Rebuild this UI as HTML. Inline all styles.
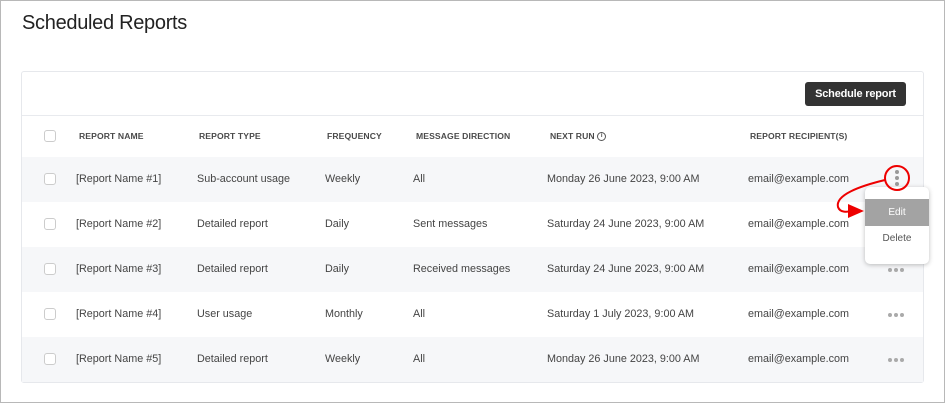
<!DOCTYPE html>
<html><head><meta charset="utf-8"><style>
*{box-sizing:border-box;margin:0;padding:0}
body{width:945px;height:403px;background:#fff;font-family:"Liberation Sans",sans-serif;position:relative;overflow:hidden}
.frame{position:absolute;left:0;top:0;width:945px;height:403px;border:1px solid #b8b8b8}
h1{position:absolute;left:22px;top:12px;font-size:20px;font-weight:normal;color:#222;letter-spacing:-0.3px}
.card{position:absolute;left:21px;top:71px;width:903px;height:312px;border:1px solid #e6e8ec;border-radius:3px}
.btn{position:absolute;left:805px;top:82px;width:101px;height:24px;background:#333;color:#fff;border-radius:3px;font-size:11px;font-weight:bold;text-align:center;line-height:24px;letter-spacing:-0.2px}
.sep{position:absolute;left:22px;top:115px;width:901px;height:1px;background:#e8eaee}
.row{position:absolute;left:22px;width:901px;height:45px;font-size:10.8px;color:#444}
.row.g{background:#f6f7f9}
.row span{position:absolute;top:0;line-height:45px;white-space:nowrap}
.hdr span{font-size:8.6px;font-weight:bold;color:#4a4a4a;letter-spacing:0.1px;line-height:43px}
.cb{position:absolute;left:22px;top:16px;width:12px;height:12px;border:1px solid #ccc;border-radius:3px;background:#fff}
.dots{position:absolute;left:866px;top:21px;width:18px;height:4px}
.dots i{position:absolute;top:0;width:4px;height:4px;border-radius:2px;background:#aaa}
</style></head><body>
<div class="frame"></div>
<h1>Scheduled Reports</h1>
<div class="card"></div>
<div class="btn">Schedule report</div>
<div class="sep"></div>
<div class="row hdr" style="top:115px;height:42px"><div class="cb" style="top:15px"></div><span style="left:57px">REPORT NAME</span><span style="left:177px">REPORT TYPE</span><span style="left:305px">FREQUENCY</span><span style="left:394px">MESSAGE DIRECTION</span><span style="left:528px">NEXT RUN <b style="display:inline-block;width:9px;height:9px;border:1px solid #555;border-radius:50%;line-height:7px;font-size:6px;text-align:center;vertical-align:middle">i</b></span><span style="left:728px">REPORT RECIPIENT(S)</span></div>

<div class="row g" style="top:157px"><div class="cb"></div><span style="left:54px">[Report Name #1]</span><span style="left:175px">Sub-account usage</span><span style="left:303px">Weekly</span><span style="left:391px">All</span><span style="left:525px">Monday 26 June 2023, 9:00 AM</span><span style="left:726px">email@example.com</span></div>
<div class="row" style="top:202px"><div class="cb"></div><span style="left:54px">[Report Name #2]</span><span style="left:175px">Detailed report</span><span style="left:303px">Daily</span><span style="left:391px">Sent messages</span><span style="left:525px">Saturday 24 June 2023, 9:00 AM</span><span style="left:726px">email@example.com</span></div>
<div class="row g" style="top:247px"><div class="cb"></div><span style="left:54px">[Report Name #3]</span><span style="left:175px">Detailed report</span><span style="left:303px">Daily</span><span style="left:391px">Received messages</span><span style="left:525px">Saturday 24 June 2023, 9:00 AM</span><span style="left:726px">email@example.com</span><div class="dots"><i style="left:0"></i><i style="left:6px"></i><i style="left:12px"></i></div></div>
<div class="row" style="top:292px"><div class="cb"></div><span style="left:54px">[Report Name #4]</span><span style="left:175px">User usage</span><span style="left:303px">Monthly</span><span style="left:391px">All</span><span style="left:525px">Saturday 1 July 2023, 9:00 AM</span><span style="left:726px">email@example.com</span><div class="dots"><i style="left:0"></i><i style="left:6px"></i><i style="left:12px"></i></div></div>
<div class="row g" style="top:337px"><div class="cb"></div><span style="left:54px">[Report Name #5]</span><span style="left:175px">Detailed report</span><span style="left:303px">Weekly</span><span style="left:391px">All</span><span style="left:525px">Monday 26 June 2023, 9:00 AM</span><span style="left:726px">email@example.com</span><div class="dots"><i style="left:0"></i><i style="left:6px"></i><i style="left:12px"></i></div></div>

<div style="position:absolute;left:865px;top:187px;width:64px;height:77px;background:#fff;border-radius:5px;box-shadow:0 1px 5px rgba(0,0,0,0.25)">
<div style="position:absolute;left:0;top:12px;width:64px;height:27px;background:#a3a3a3;color:#fff;font-size:10px;text-align:center;line-height:27px">Edit</div>
<div style="position:absolute;left:0;top:42px;width:64px;height:20px;color:#555;font-size:10px;text-align:center;line-height:20px">Delete</div>
</div>
<div style="position:absolute;left:895px;top:170px;width:4px;height:16px">
<i style="position:absolute;left:0;top:0;width:4px;height:4px;border-radius:2px;background:#999"></i>
<i style="position:absolute;left:0;top:6px;width:4px;height:4px;border-radius:2px;background:#999"></i>
<i style="position:absolute;left:0;top:12px;width:4px;height:4px;border-radius:2px;background:#999"></i>
</div>
<svg style="position:absolute;left:0;top:0" width="945" height="403">
<circle cx="897" cy="178" r="12" fill="none" stroke="#e00" stroke-width="2"/>
<path d="M885 180 C860 186 835 195 838 207 C840 213 848 212 850 211" fill="none" stroke="#e00" stroke-width="2"/>
<polygon points="848,204 864,211 848,218" fill="#e00"/>
</svg>
</body></html>
